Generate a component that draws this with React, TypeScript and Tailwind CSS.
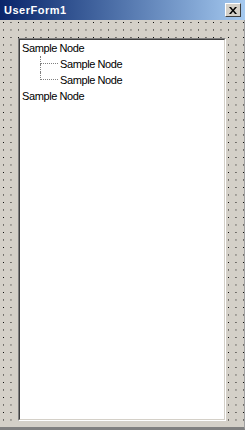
const nodes = [
  { label: "Sample Node", children: ["Sample Node", "Sample Node"] },
  { label: "Sample Node", children: [] as string[] },
];

const Connector = ({ last }: { last: boolean }) => (
  <div className="ml-[18px] flex h-4 w-[18px] shrink-0 flex-col">
    <div className="h-2 border-b border-l border-dotted border-[#808080]" />
    <div
      className={
        last ? "h-2" : "h-2 border-l border-dotted border-[#808080]"
      }
    />
  </div>
);

const CloseButton = () => (
  <div className="flex h-[14px] w-4 items-center justify-center border border-b-[#404040] border-l-white border-r-[#404040] border-t-white bg-[#d4d0c8]">
    <svg width="8" height="7" viewBox="0 0 8 7" className="block">
      <path d="M0 0h2l2 2.5L6 0h2L5 3.5 8 7H6L4 4.5 2 7H0l3-3.5z" fill="#000" />
    </svg>
  </div>
);

export default function App() {
  return (
    <div
      className="flex h-[430px] w-[245px] flex-col overflow-hidden bg-[#d4d0c8]"
      style={{ fontFamily: '"Liberation Sans", Arial, sans-serif' }}
    >
      <div className="flex h-5 shrink-0 items-center justify-between bg-gradient-to-r from-[#0a246a] to-[#a6caf0] pl-[4px] pr-[4px]">
        <span className="text-[11px] font-bold leading-none tracking-[0.5px] text-white">
          UserForm1
        </span>
        <CloseButton />
      </div>
      <div className="flex flex-1 flex-col border-b-[3px] border-r border-b-[#808080] border-r-[#a0a0a0] bg-[conic-gradient(from_270deg_at_1px_1px,#000_90deg,transparent_0)] bg-[length:7.5px_7.5px] bg-[position:3px_2px] px-[18px] pb-[6px] pt-[18px]">
        <div className="flex flex-1 flex-col border border-b-white border-l-[#808080] border-r-white border-t-[#808080]">
          <div className="flex flex-1 flex-col border border-b-[#d4d0c8] border-l-[#404040] border-r-[#d4d0c8] border-t-[#404040] bg-white pl-[2px] text-[11px] leading-4 tracking-[-0.4px] text-black">
            {nodes.map((n, i) => (
              <div key={i} className="flex flex-col">
                <div className="h-4">{n.label}</div>
                {n.children.map((c, j) => (
                  <div key={j} className="flex h-4 items-start">
                    <Connector last={j === n.children.length - 1} />
                    <span className="ml-[2px]">{c}</span>
                  </div>
                ))}
              </div>
            ))}
          </div>
        </div>
      </div>
    </div>
  );
}
